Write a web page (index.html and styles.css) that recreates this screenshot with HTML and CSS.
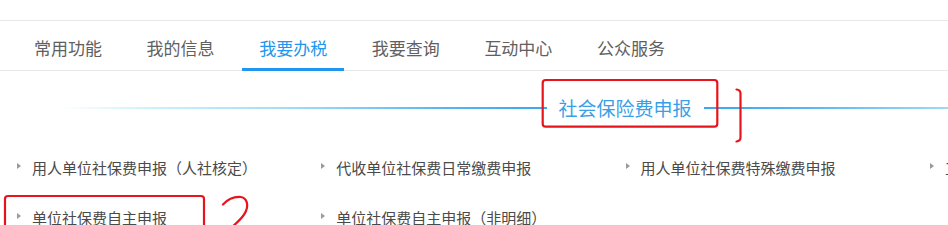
FILE: index.html
```html
<!DOCTYPE html>
<html lang="zh-CN">
<head>
<meta charset="utf-8">
<title>我要办税</title>
<link rel="stylesheet" href="styles.css">
</head>
<body>
<div class="page">
  <div class="top-space"></div>
  <nav class="tabs">
    <a class="tab">常用功能</a>
    <a class="tab">我的信息</a>
    <a class="tab active">我要办税</a>
    <a class="tab">我要查询</a>
    <a class="tab">互动中心</a>
    <a class="tab">公众服务</a>
  </nav>
  <div class="divider">
    <span class="line line-left"></span>
    <h2 class="title">社会保险费申报</h2>
    <span class="line line-right"></span>
  </div>
  <ul class="items">
    <li class="item"><span class="arrow"></span>用人单位社保费申报<span class="paren">（</span>人社核定<span class="paren">）</span></li>
    <li class="item"><span class="arrow"></span>代收单位社保费日常缴费申报</li>
    <li class="item"><span class="arrow"></span>用人单位社保费特殊缴费申报</li>
    <li class="item"><span class="arrow"></span>工程项目社保费申报</li>
    <li class="item"><span class="arrow"></span>单位社保费自主申报</li>
    <li class="item"><span class="arrow"></span>单位社保费自主申报<span class="paren">（</span>非明细<span class="paren">）</span></li>
  </ul>
  <svg class="marks" width="948" height="225" viewBox="0 0 948 225" aria-hidden="true">
    <rect x="542.7" y="80" width="174.6" height="46.7" rx="3" ry="3"/>
    <path d="M736.5,89.5 Q740.5,90 740.5,93.5 L740.5,137.5 Q740.5,141 736.5,141.5"/>
    <rect x="5" y="196" width="199" height="45" rx="3" ry="3"/>
    <path d="M223,204.5 C228,199 235,196.5 241,197 C247,198 248.5,205 246,211 C243.5,217 238,222 232,227"/>
  </svg>
</div>
</body>
</html>
```

FILE: styles.css
```css
html, body {
  margin: 0;
  padding: 0;
  background: #ffffff;
  overflow: hidden;
}

.page {
  position: relative;
  width: 948px;
  height: 225px;
  overflow: hidden;
  font-family: "Noto Sans CJK SC", "Noto Sans", sans-serif;
}

.top-space {
  height: 20px;
}

.tabs {
  display: flex;
  gap: 10.6px;
  padding-left: 17px;
  height: 49px;
  border-top: 1px solid #e8e8e8;
  border-bottom: 1px solid #e8e8e8;
}

.tab {
  box-sizing: border-box;
  width: 102px;
  height: 50px;
  padding-top: 6px;
  line-height: 41px;
  font-size: 17px;
  color: #606060;
  text-align: center;
  border-bottom: 3px solid transparent;
  cursor: pointer;
}

.tab.active {
  color: #2196ee;
  border-bottom-color: #1f97ee;
}

.divider {
  display: flex;
  align-items: center;
  width: 1130px;
  margin: 24px 0 0 60px;
  height: 26px;
}

.line {
  flex: 1;
  height: 2px;
}

.line-left {
  background: linear-gradient(to right, rgba(220, 247, 253, 0) 0%, #cdf2fb 18%, #9bdaf6 50%, #55b5f1 80%, #3aa8ee 100%);
}

.line-right {
  background: linear-gradient(to left, rgba(220, 247, 253, 0) 0%, #cdf2fb 18%, #9bdaf6 50%, #55b5f1 80%, #3aa8ee 100%);
}

.title {
  margin: 0;
  padding: 0 12px;
  font-size: 19px;
  font-weight: normal;
  line-height: 26px;
  color: #3a9fe6;
  white-space: nowrap;
}

.items {
  list-style: none;
  margin: 21px 0 0 0;
  padding: 0 0 0 17px;
  display: grid;
  grid-template-columns: repeat(4, 304.3px);
}

.item {
  display: flex;
  align-items: center;
  height: 50px;
  font-size: 15px;
  color: #4a4a4a;
  white-space: nowrap;
}

.paren {
  font-family: "Noto Sans CJK TC", "Noto Sans CJK SC", sans-serif;
}

.arrow {
  width: 0;
  height: 0;
  border-left: 4px solid #9a9a9a;
  border-top: 3px solid transparent;
  border-bottom: 3px solid transparent;
  margin-right: 11px;
  margin-bottom: 3px;
}

.marks {
  position: absolute;
  left: 0;
  top: 0;
  pointer-events: none;
}

.marks rect,
.marks path {
  fill: none;
  stroke: #e8141c;
  stroke-width: 2.2;
  stroke-linecap: round;
  stroke-linejoin: round;
}
```
